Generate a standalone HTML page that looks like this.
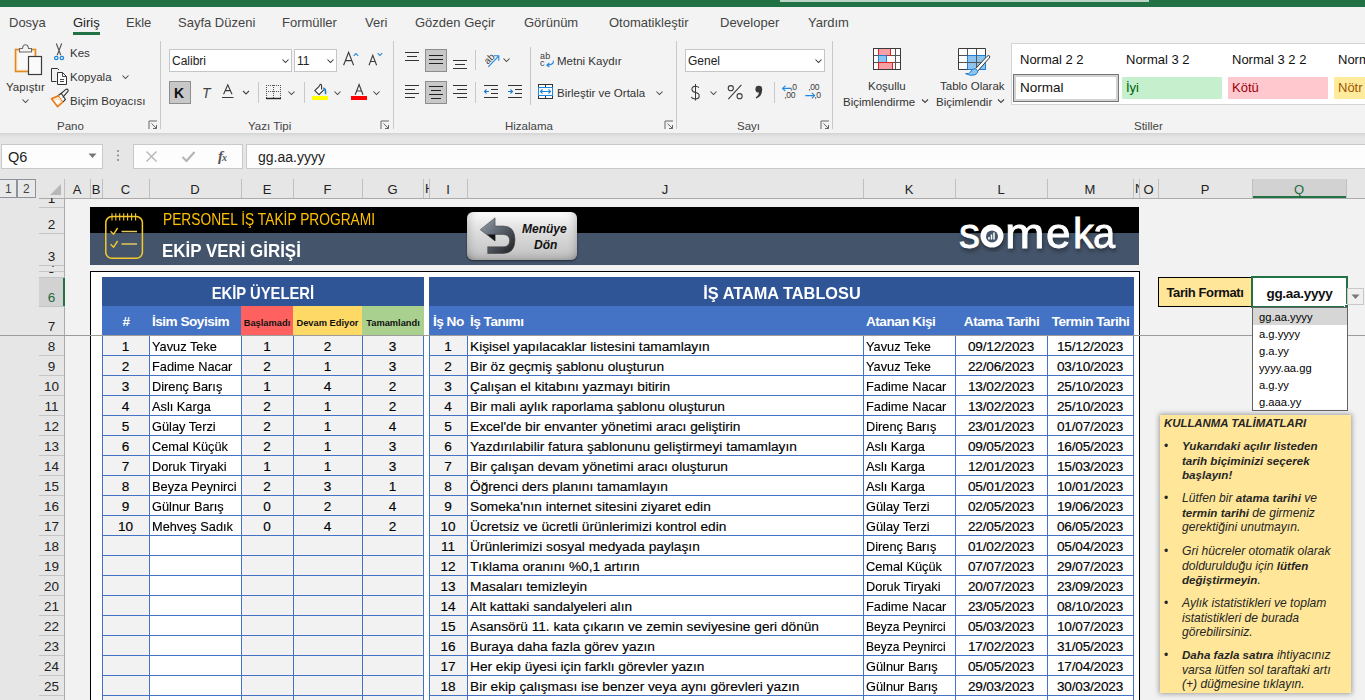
<!DOCTYPE html>
<html><head><meta charset="utf-8">
<style>
*{margin:0;padding:0;box-sizing:border-box}
html,body{width:1365px;height:700px;overflow:hidden;background:#f2f2f2}
body{position:relative;font-family:"Liberation Sans",sans-serif;color:#262626}
.a{position:absolute}
.t{position:absolute;white-space:nowrap;line-height:1}
#titlebar{left:0;top:0;width:1365px;height:7px;background:#217346}
#search{left:780px;top:0;width:369px;height:2px;background:#bcd5c6}
#tabs{left:0;top:7px;width:1365px;height:30px;background:#f3f3f3}
.tab{position:absolute;top:16px;font-size:13px;color:#444;white-space:nowrap;line-height:13px}
#ribbon{left:0;top:37px;width:1365px;height:96px;background:#f3f3f3}
#rshadow{left:0;top:133px;width:1365px;height:4px;background:linear-gradient(#d3d3d3,#e6e6e6)}
#fbar{left:0;top:137px;width:1365px;height:42px;background:#e6e6e6}
.rl{position:absolute;font-size:11.5px;color:#333;white-space:nowrap;line-height:12px}
.gl{position:absolute;top:120px;font-size:11.5px;color:#444;white-space:nowrap;line-height:12px}
.sep{position:absolute;width:1px;background:#c8c8c8}
.box{position:absolute;background:#fff;border:1px solid #c6c6c6}
</style></head><body>
<div id="titlebar" class="a"></div>
<div id="search" class="a"></div>
<div id="tabs" class="a"></div>
<div class="tab" style="left:9px">Dosya</div>
<div class="tab" style="left:73px;color:#222">Giriş</div>
<div class="a" style="left:73px;top:32px;width:27px;height:3px;background:#217346"></div>
<div class="tab" style="left:126px">Ekle</div>
<div class="tab" style="left:178px">Sayfa Düzeni</div>
<div class="tab" style="left:282px">Formüller</div>
<div class="tab" style="left:365px">Veri</div>
<div class="tab" style="left:415px">Gözden Geçir</div>
<div class="tab" style="left:524px">Görünüm</div>
<div class="tab" style="left:609px">Otomatikleştir</div>
<div class="tab" style="left:720px">Developer</div>
<div class="tab" style="left:808px">Yardım</div>
<div id="ribbon" class="a"></div>
<div id="rshadow" class="a"></div>
<div id="fbar" class="a"></div>
<!-- Pano -->
<svg class="a" style="left:12px;top:43px" width="34" height="34" viewBox="0 0 34 34">
 <rect x="3.5" y="6.5" width="20" height="22" fill="#fde6c8" stroke="#e08a1e" stroke-width="1.6"/>
 <rect x="5.5" y="8.5" width="16" height="18" fill="#fafafa"/>
 <path d="M7.5 9 V5.5 H10.5 Q11 1.8 13.5 1.8 Q16 1.8 16.5 5.5 H19.5 V9 Z" fill="#f3f3f3" stroke="#6b6b6b" stroke-width="1.1"/>
 <rect x="16.5" y="13.5" width="13" height="18" fill="#fafafa" stroke="#3b3b3b" stroke-width="1.2"/>
</svg>
<div class="rl" style="left:6px;top:81px">Yapıştır</div>
<svg class="a" style="left:21px;top:98px" width="9" height="6" viewBox="0 0 9 6"><path d="M1.5 1.5 L4.5 4.5 L7.5 1.5" fill="none" stroke="#444" stroke-width="1.05"/></svg>
<svg class="a" style="left:45px;top:40px" width="30" height="22" viewBox="45 40 30 22">
 <path d="M56.3 43.5 L60.8 55.2 M61.7 43.5 L57.2 55.2" stroke="#505050" stroke-width="1.1" fill="none"/>
 <circle cx="56.3" cy="58" r="1.7" fill="none" stroke="#1f87e0" stroke-width="1.3"/>
 <circle cx="61.9" cy="58" r="1.7" fill="none" stroke="#1f87e0" stroke-width="1.3"/>
</svg>
<div class="rl" style="left:70px;top:47px">Kes</div>
<svg class="a" style="left:45px;top:62px" width="30" height="26" viewBox="45 62 30 26">
 <path d="M56.5 81.5 H51.5 V68.5 H57.5 L59 70" fill="none" stroke="#333" stroke-width="1"/>
 <path d="M57.5 72.5 H62.5 L66.5 76.5 V84.5 H57.5 Z" fill="#fafafa" stroke="#333" stroke-width="1"/>
 <path d="M62.5 72.5 V76.5 H66.5 M60 79.5 H64 M60 81.5 H64" fill="none" stroke="#333" stroke-width="0.9"/>
</svg>
<div class="rl" style="left:70px;top:71px">Kopyala</div>
<svg class="a" style="left:121px;top:74px" width="9" height="6" viewBox="0 0 9 6"><path d="M1.5 1.5 L4.5 4.5 L7.5 1.5" fill="none" stroke="#444" stroke-width="1.05"/></svg>
<svg class="a" style="left:45px;top:88px" width="30" height="22" viewBox="45 88 30 22">
 <path d="M51.5 98.8 L58.8 95.5 L63.2 101.8 L57.6 106.8 Z" fill="#fbe3c6" stroke="#e8780f" stroke-width="1.5" stroke-linejoin="round"/>
 <path d="M54.5 101 L58 99.5 L60 102.5 L57.5 104.5 Z" fill="#fff"/>
 <path d="M58.6 95.3 L61.2 93.2 L65.4 99.4 L63.2 101.8" fill="#f7f7f7" stroke="#333" stroke-width="1.1"/>
 <path d="M60.5 94 L65.6 89.6 Q67 88.6 67.9 89.8 Q68.6 91 67.5 92 L62.8 97.3" fill="none" stroke="#333" stroke-width="1.1"/>
</svg>
<div class="rl" style="left:70px;top:95px">Biçim Boyacısı</div>
<div class="gl" style="left:57px">Pano</div>
<svg class="a" style="left:148px;top:120px" width="10" height="10" viewBox="0 0 10 10"><path d="M1 9 V1 H9 M3.5 3.5 L8.5 8.5 M5 8.5 H8.5 V5" fill="none" stroke="#666" stroke-width="1"/></svg>
<div class="sep" style="left:160px;top:41px;height:88px"></div>
<!-- Yazı Tipi -->
<div class="box" style="left:169px;top:49px;width:123px;height:23px"></div>
<div class="rl" style="left:172px;top:55px;font-size:12px;color:#222">Calibri</div>
<svg class="a" style="left:281px;top:58px" width="9" height="6" viewBox="0 0 9 6"><path d="M1.5 1.5 L4.5 4.5 L7.5 1.5" fill="none" stroke="#333" stroke-width="1.05"/></svg>
<div class="box" style="left:294px;top:49px;width:43px;height:23px"></div>
<div class="rl" style="left:297px;top:55px;font-size:12px;color:#222">11</div>
<svg class="a" style="left:326px;top:58px" width="9" height="6" viewBox="0 0 9 6"><path d="M1.5 1.5 L4.5 4.5 L7.5 1.5" fill="none" stroke="#333" stroke-width="1.05"/></svg>
<svg class="a" style="left:340px;top:50px" width="45" height="17" viewBox="340 50 45 17">
 <path d="M343.6 65.2 L348.6 52.3 L353.6 65.2 M345.4 60.6 H351.8" fill="none" stroke="#3a3a3a" stroke-width="1.1"/>
 <path d="M353.6 55.8 L355.9 53.5 L358.2 55.8" fill="none" stroke="#2b8ad8" stroke-width="1.1"/>
 <path d="M369 65.2 L372.8 55.3 L376.6 65.2 M370.4 61.5 H375.2" fill="none" stroke="#3a3a3a" stroke-width="1.1"/>
 <path d="M377.6 53.2 L379.9 55.5 L382.2 53.2" fill="none" stroke="#2b8ad8" stroke-width="1.1"/>
</svg>
<div class="a" style="left:169px;top:81px;width:22px;height:23px;background:#c8c8c8;border:1px solid #8d8d8d"></div>
<div class="t" style="left:174px;top:86px;font-size:14px;font-weight:bold;color:#111">K</div>
<div class="t" style="left:202px;top:86px;font-size:14px;font-style:italic;color:#444">T</div>
<svg class="a" style="left:220px;top:82px" width="16" height="18" viewBox="220 82 16 18">
 <path d="M223.6 94.2 L227.8 84.8 L232 94.2 M225.2 90.6 H230.4" fill="none" stroke="#3a3a3a" stroke-width="1.1"/>
 <path d="M222 97.5 H233.5" stroke="#3a3a3a" stroke-width="1"/>
</svg>
<svg class="a" style="left:242px;top:90px" width="8" height="5" viewBox="0 0 8 5"><path d="M1 1 L4 4 L7 1" fill="none" stroke="#444" stroke-width="1.1"/></svg>
<div class="sep" style="left:258px;top:82px;height:21px"></div>
<svg class="a" style="left:265px;top:84px" width="17" height="16" viewBox="0 0 17 16">
 <path d="M1.5 1 V14 M8.5 1 V14 M15.5 1 V14" fill="none" stroke="#555" stroke-width="1" stroke-dasharray="1 1"/><path d="M1 1.5 H16 M1 7.5 H16" fill="none" stroke="#555" stroke-width="1" stroke-dasharray="1 1"/>
 <path d="M1 14.5 H16" stroke="#222" stroke-width="1.4"/>
</svg>
<svg class="a" style="left:287px;top:90px" width="9" height="6" viewBox="0 0 9 6"><path d="M1.5 1.5 L4.5 4.5 L7.5 1.5" fill="none" stroke="#444" stroke-width="1.05"/></svg>
<div class="sep" style="left:304px;top:82px;height:21px"></div>
<svg class="a" style="left:310px;top:82px" width="20" height="19" viewBox="310 82 20 19">
 <path d="M319.4 86.1 L314.8 90.7 L319 94.7 L324 89.6" fill="#fbfbfb" stroke="#333" stroke-width="1.1" stroke-linejoin="round"/>
 <path d="M319.4 86.1 Q319.9 84.2 320.8 84.3 Q321.6 84.5 321.6 86.3 V89.6" fill="none" stroke="#333" stroke-width="1.1"/>
 <path d="M323.3 88.2 Q326.1 88.6 325.5 94.2" fill="none" stroke="#1f7fd4" stroke-width="1.7"/>
 <rect x="312" y="96" width="16" height="4" fill="#ffff00"/>
</svg>
<svg class="a" style="left:333px;top:90px" width="9" height="6" viewBox="0 0 9 6"><path d="M1.5 1.5 L4.5 4.5 L7.5 1.5" fill="none" stroke="#444" stroke-width="1.05"/></svg>
<svg class="a" style="left:350px;top:82px" width="18" height="19" viewBox="350 82 18 19">
 <path d="M355.2 94.8 L359.1 84.5 L363 94.8 M356.7 91 H361.5" fill="none" stroke="#3a3a3a" stroke-width="1.1"/>
 <rect x="351" y="96" width="16" height="4" fill="#ff0000"/>
</svg>
<svg class="a" style="left:372px;top:90px" width="9" height="6" viewBox="0 0 9 6"><path d="M1.5 1.5 L4.5 4.5 L7.5 1.5" fill="none" stroke="#444" stroke-width="1.05"/></svg>
<div class="gl" style="left:248px">Yazı Tipi</div>
<svg class="a" style="left:380px;top:120px" width="10" height="10" viewBox="0 0 10 10"><path d="M1 9 V1 H9 M3.5 3.5 L8.5 8.5 M5 8.5 H8.5 V5" fill="none" stroke="#666" stroke-width="1"/></svg>
<div class="sep" style="left:393px;top:41px;height:88px"></div>
<!-- Hizalama -->
<svg class="a" style="left:404px;top:51px" width="16" height="12" viewBox="0 0 16 12"><path d="M1 1.5 H15 M3 5.5 H13 M1 9.5 H15" stroke="#333" stroke-width="1"/></svg>
<div class="a" style="left:425px;top:49px;width:22px;height:23px;background:#c8c8c8;border:1px solid #8d8d8d"></div>
<svg class="a" style="left:428px;top:53px" width="16" height="14" viewBox="0 0 16 14"><path d="M1 2.5 H15 M1 6.5 H15 M1 10.5 H15" stroke="#222" stroke-width="1"/></svg>
<svg class="a" style="left:452px;top:58px" width="16" height="12" viewBox="0 0 16 12"><path d="M1 2.5 H15 M3 6.5 H13 M1 10.5 H15" stroke="#333" stroke-width="1"/></svg>
<div class="sep" style="left:475px;top:50px;height:20px"></div>
<svg class="a" style="left:480px;top:48px" width="22" height="22" viewBox="480 48 22 22">
 <text x="483" y="62.5" font-size="9.5" font-family="Liberation Sans" fill="#3a3a3a" transform="rotate(-45 488 58)">ab</text>
 <path d="M488.3 66.8 L498.6 56.1 M493.8 55.8 H498.8 V60.8" fill="none" stroke="#1f87e0" stroke-width="1.1"/>
</svg>
<svg class="a" style="left:502px;top:57px" width="9" height="6" viewBox="0 0 9 6"><path d="M1.5 1.5 L4.5 4.5 L7.5 1.5" fill="none" stroke="#444" stroke-width="1.05"/></svg>
<div class="sep" style="left:530px;top:47px;height:58px"></div>
<svg class="a" style="left:538px;top:50px" width="18" height="18" viewBox="538 50 18 18">
 <text x="540" y="59.3" font-size="9" font-family="Liberation Sans" fill="#3a3a3a" letter-spacing="0.3">ab</text>
 <text x="540" y="66.3" font-size="9" font-family="Liberation Sans" fill="#3a3a3a">c</text>
 <path d="M553.3 60.6 Q554.3 64.6 547.3 65.2 M549.3 63 L546.9 65.2 L549.3 67.2" fill="none" stroke="#1f87e0" stroke-width="1.1"/>
</svg>
<div class="rl" style="left:557px;top:55px">Metni Kaydır</div>
<svg class="a" style="left:404px;top:84px" width="16" height="15" viewBox="0 0 16 15"><path d="M1 1.5 H15 M1 5.5 H11 M1 9.5 H15 M1 13.5 H11" stroke="#333" stroke-width="1"/></svg>
<div class="a" style="left:425px;top:81px;width:22px;height:23px;background:#c8c8c8;border:1px solid #8d8d8d"></div>
<svg class="a" style="left:428px;top:85px" width="16" height="15" viewBox="0 0 16 15"><path d="M1 1.5 H15 M3 5.5 H13 M1 9.5 H15 M3 13.5 H13" stroke="#222" stroke-width="1"/></svg>
<svg class="a" style="left:452px;top:84px" width="16" height="15" viewBox="0 0 16 15"><path d="M1 1.5 H15 M5 5.5 H15 M1 9.5 H15 M5 13.5 H15" stroke="#333" stroke-width="1"/></svg>
<div class="sep" style="left:475px;top:82px;height:21px"></div>
<svg class="a" style="left:483px;top:84px" width="16" height="15" viewBox="0 0 16 15"><path d="M1 1.5 H15 M8 5.5 H15 M8 9.5 H15 M1 13.5 H15" stroke="#333" stroke-width="1"/><path d="M6 7.5 H1.5 M3.5 5.5 L1.5 7.5 L3.5 9.5" fill="none" stroke="#1e7ad6" stroke-width="1.1"/></svg>
<svg class="a" style="left:507px;top:84px" width="16" height="15" viewBox="0 0 16 15"><path d="M1 1.5 H15 M8 5.5 H15 M8 9.5 H15 M1 13.5 H15" stroke="#333" stroke-width="1"/><path d="M1 7.5 H5.5 M3.5 5.5 L5.5 7.5 L3.5 9.5" fill="none" stroke="#1e7ad6" stroke-width="1.1"/></svg>
<svg class="a" style="left:536px;top:82px" width="19" height="19" viewBox="536 82 19 19">
 <rect x="538.5" y="84.5" width="14" height="14" fill="#fff" stroke="#333" stroke-width="1"/>
 <path d="M545.5 84.5 V87.5 M545.5 95.5 V98.5" stroke="#333" stroke-width="1"/>
 <rect x="538.5" y="87.5" width="14" height="8" fill="#fff" stroke="#1f87e0" stroke-width="1"/>
 <path d="M540.5 91.5 H550.5 M542.5 89.5 L540.5 91.5 L542.5 93.5 M548.5 89.5 L550.5 91.5 L548.5 93.5" fill="none" stroke="#1f87e0" stroke-width="1.1"/>
</svg>
<div class="rl" style="left:557px;top:87px">Birleştir ve Ortala</div>
<svg class="a" style="left:655px;top:90px" width="9" height="6" viewBox="0 0 9 6"><path d="M1.5 1.5 L4.5 4.5 L7.5 1.5" fill="none" stroke="#444" stroke-width="1.05"/></svg>
<div class="gl" style="left:505px">Hizalama</div>
<svg class="a" style="left:664px;top:120px" width="10" height="10" viewBox="0 0 10 10"><path d="M1 9 V1 H9 M3.5 3.5 L8.5 8.5 M5 8.5 H8.5 V5" fill="none" stroke="#666" stroke-width="1"/></svg>
<div class="sep" style="left:676px;top:41px;height:88px"></div>
<!-- Sayı -->
<div class="box" style="left:685px;top:49px;width:140px;height:23px"></div>
<div class="rl" style="left:688px;top:55px;font-size:12px;color:#222">Genel</div>
<svg class="a" style="left:814px;top:58px" width="9" height="6" viewBox="0 0 9 6"><path d="M1.5 1.5 L4.5 4.5 L7.5 1.5" fill="none" stroke="#333" stroke-width="1.05"/></svg>
<svg class="a" style="left:688px;top:82px" width="14" height="20" viewBox="688 82 14 20">
 <path d="M695.5 84 V100.5" stroke="#3a3a3a" stroke-width="1.05"/>
 <path d="M699 87.6 Q697.6 86.2 695.3 86.2 Q691.9 86.4 691.9 89.3 Q692 91.8 695.5 92.5 Q699.3 93.2 699.2 96.1 Q699 98.8 695.3 98.9 Q692.6 98.9 691.2 97.2" fill="none" stroke="#3a3a3a" stroke-width="1.05"/>
</svg>
<svg class="a" style="left:709px;top:90px" width="9" height="6" viewBox="0 0 9 6"><path d="M1.5 1.5 L4.5 4.5 L7.5 1.5" fill="none" stroke="#444" stroke-width="1.05"/></svg>
<svg class="a" style="left:725px;top:82px" width="20" height="20" viewBox="725 82 20 20">
 <circle cx="730.8" cy="88.2" r="2.6" fill="none" stroke="#3a3a3a" stroke-width="1.05"/>
 <circle cx="739.6" cy="96.2" r="2.6" fill="none" stroke="#3a3a3a" stroke-width="1.05"/>
 <path d="M728.3 99.2 L741.4 84.8" stroke="#3a3a3a" stroke-width="1.05"/>
</svg>
<svg class="a" style="left:753px;top:84px" width="12" height="16" viewBox="753 84 12 16">
 <circle cx="758.8" cy="89.2" r="3.4" fill="#3a3a3a"/>
 <path d="M762 89.5 Q762.8 95.8 756.2 98.6 L755.6 97.5 Q759 95.5 759 91.8 Z" fill="#3a3a3a"/>
</svg>
<div class="sep" style="left:774px;top:82px;height:21px"></div>
<svg class="a" style="left:780px;top:82px" width="20" height="19" viewBox="780 82 20 19">
 <text x="790.3" y="90.4" font-size="8.6" font-family="Liberation Sans" fill="#3a3a3a" letter-spacing="-0.4">,0</text>
 <text x="784.3" y="98.4" font-size="8.6" font-family="Liberation Sans" fill="#3a3a3a" letter-spacing="-0.4">,00</text>
 <path d="M791.5 88.4 H782.6 M785.4 85.6 L782.6 88.4 L785.4 91.2" fill="none" stroke="#1f87e0" stroke-width="1.1"/>
</svg>
<svg class="a" style="left:803px;top:82px" width="20" height="19" viewBox="803 82 20 19">
 <text x="808.3" y="90.4" font-size="8.6" font-family="Liberation Sans" fill="#3a3a3a" letter-spacing="-0.4">,00</text>
 <text x="814.3" y="98.4" font-size="8.6" font-family="Liberation Sans" fill="#3a3a3a" letter-spacing="-0.4">,0</text>
 <path d="M805.3 95.6 H814.6 M811.8 92.8 L814.6 95.6 L811.8 98.4" fill="none" stroke="#1f87e0" stroke-width="1.1"/>
</svg>
<div class="gl" style="left:737px">Sayı</div>
<svg class="a" style="left:820px;top:120px" width="10" height="10" viewBox="0 0 10 10"><path d="M1 9 V1 H9 M3.5 3.5 L8.5 8.5 M5 8.5 H8.5 V5" fill="none" stroke="#666" stroke-width="1"/></svg>
<div class="sep" style="left:832px;top:41px;height:88px"></div>
<!-- Stiller -->
<svg class="a" style="left:870px;top:45px" width="35" height="28" viewBox="870 45 35 28">
 <rect x="873.5" y="48.5" width="27" height="21" fill="#fdfdfd"/>
 <path d="M873.5 55.5 H900.5 M873.5 62.5 H900.5 M878.5 48.5 V69.5 M895.5 48.5 V69.5" stroke="#555" stroke-width="1"/>
 <rect x="878.5" y="48.5" width="12" height="7" fill="#f7a1a6" stroke="#e02020" stroke-width="1"/>
 <rect x="878.5" y="55.5" width="8" height="7" fill="#8cc4ee" stroke="#1f7fd4" stroke-width="1"/>
 <rect x="878.5" y="62.5" width="14" height="7" fill="#f7a1a6" stroke="#e02020" stroke-width="1"/>
 <rect x="873.5" y="48.5" width="27" height="21" fill="none" stroke="#3a3a3a" stroke-width="1"/>
</svg>
<div class="rl" style="left:868px;top:80px">Koşullu</div>
<div class="rl" style="left:843px;top:96px">Biçimlendirme</div>
<svg class="a" style="left:921px;top:98px" width="8" height="6" viewBox="0 0 8 6"><path d="M1 1.5 L4 4.5 L7 1.5" fill="none" stroke="#444" stroke-width="1.1"/></svg>
<svg class="a" style="left:955px;top:45px" width="38" height="32" viewBox="955 45 38 32">
 <rect x="958.5" y="48.5" width="27" height="21" fill="#fdfdfd"/>
 <rect x="967.5" y="55.5" width="18" height="14" fill="#8cc4ee" stroke="#1f7fd4" stroke-width="1"/>
 <path d="M958.5 55.5 H967.5 M958.5 62.5 H967.5 M967.5 48.5 V55.5 M976.5 48.5 V55.5 M967.5 62.5 H985.5 M976.5 55.5 V69.5" stroke="#555" stroke-width="1"/>
 <path d="M958.5 69.5 V48.5 H985.5 V55.5 M958.5 69.5 H967.5" fill="none" stroke="#3a3a3a" stroke-width="1"/>
 <path d="M975.5 68.8 L987 56.3 Q988.5 55 989.5 55.9 Q990.3 56.9 989 58.3 L977.8 71" fill="#fdfdfd" stroke="#3a3a3a" stroke-width="1"/>
 <path d="M975.2 68.6 Q971.5 69 970.5 72 Q969.3 74.2 965.5 73.6 Q970.5 76.5 975 74.8 Q978 73.3 977.8 71 Z" fill="#8cc4ee" stroke="#1f7fd4" stroke-width="1"/>
</svg>
<div class="rl" style="left:940px;top:80px">Tablo Olarak</div>
<div class="rl" style="left:936px;top:96px">Biçimlendir</div>
<svg class="a" style="left:997px;top:98px" width="8" height="6" viewBox="0 0 8 6"><path d="M1 1.5 L4 4.5 L7 1.5" fill="none" stroke="#444" stroke-width="1.1"/></svg>
<div class="a" style="left:1011px;top:43px;width:360px;height:62px;background:#fff;border:1px solid #d4d4d4"></div>
<div class="t" style="left:1020px;top:53px;font-size:13px;color:#111">Normal 2 2</div>
<div class="t" style="left:1126px;top:53px;font-size:13px;color:#111">Normal 3 2</div>
<div class="t" style="left:1232px;top:53px;font-size:13px;color:#111">Normal 3 2 2</div>
<div class="t" style="left:1338px;top:53px;font-size:13px;color:#111">Normal</div>
<div class="a" style="left:1013px;top:74px;width:106px;height:28px;border:1px solid #767676;box-shadow:inset 0 0 0 2px #d2d2d2;background:#fff"></div>
<div class="t" style="left:1020px;top:81px;font-size:13.5px;color:#111">Normal</div>
<div class="a" style="left:1122px;top:77px;width:100px;height:22px;background:#c6efce"></div>
<div class="t" style="left:1126px;top:81px;font-size:13px;color:#006100">İyi</div>
<div class="a" style="left:1228px;top:77px;width:100px;height:22px;background:#ffc7ce"></div>
<div class="t" style="left:1232px;top:81px;font-size:13px;color:#9c0006">Kötü</div>
<div class="a" style="left:1334px;top:77px;width:40px;height:22px;background:#ffeb9c"></div>
<div class="t" style="left:1338px;top:81px;font-size:13px;color:#9c5700">Nötr</div>
<div class="gl" style="left:1134px">Stiller</div>

<div class="box" style="left:1px;top:144px;width:102px;height:25px;background:#fdfdfd;border-color:#c9c9c9"></div>
<div class="t" style="left:8px;top:150px;font-size:14.5px;color:#222">Q6</div>
<svg class="a" style="left:88px;top:153px" width="9" height="6" viewBox="0 0 9 6"><path d="M0.5 0.5 H8.5 L4.5 5 Z" fill="#777"/></svg>
<svg class="a" style="left:116px;top:149px" width="4" height="13" viewBox="0 0 4 13"><circle cx="2" cy="2" r="1.1" fill="#8a8a8a"/><circle cx="2" cy="6.5" r="1.1" fill="#8a8a8a"/><circle cx="2" cy="11" r="1.1" fill="#8a8a8a"/></svg>
<div class="box" style="left:133px;top:144px;width:110px;height:25px;background:#fdfdfd;border-color:#c9c9c9"></div>
<svg class="a" style="left:145px;top:150px" width="13" height="13" viewBox="0 0 13 13"><path d="M1.5 1.5 L11.5 11.5 M11.5 1.5 L1.5 11.5" stroke="#b3b3b3" stroke-width="1.3"/></svg>
<svg class="a" style="left:181px;top:150px" width="15" height="13" viewBox="0 0 15 13"><path d="M1.5 7 L5.5 11 L13.5 2" fill="none" stroke="#b3b3b3" stroke-width="2"/></svg>
<div class="t" style="left:218px;top:149px;font-size:15px;font-style:italic;font-weight:bold;color:#555;font-family:'Liberation Serif',serif">f<span style="font-size:10px;margin-left:-1px">x</span></div>
<div class="box" style="left:246px;top:144px;width:1125px;height:25px;background:#fdfdfd;border-color:#c9c9c9"></div>
<div class="t" style="left:258px;top:150px;font-size:14px;color:#222">gg.aa.yyyy</div>

<div class="a" style="left:0;top:179px;width:1365px;height:20px;background:#e6e6e6"></div>
<div class="a" style="left:39px;top:198px;width:1326px;height:1px;background:#ababab"></div>
<div class="a" style="left:1252px;top:179px;width:95px;height:19px;background:#d2d2d2"></div>
<div class="a" style="left:1252px;top:196px;width:95px;height:2px;background:#217346"></div>
<div class="a" style="left:64px;top:179px;width:1px;height:19px;background:#c0c0c0"></div>
<div class="t" style="left:64px;top:183px;width:26px;text-align:center;font-size:13px;color:#222">A</div>
<div class="a" style="left:90px;top:179px;width:1px;height:19px;background:#c0c0c0"></div>
<div class="t" style="left:90px;top:183px;width:12px;text-align:center;font-size:13px;color:#222">B</div>
<div class="a" style="left:102px;top:179px;width:1px;height:19px;background:#c0c0c0"></div>
<div class="t" style="left:102px;top:183px;width:47px;text-align:center;font-size:13px;color:#222">C</div>
<div class="a" style="left:149px;top:179px;width:1px;height:19px;background:#c0c0c0"></div>
<div class="t" style="left:149px;top:183px;width:92px;text-align:center;font-size:13px;color:#222">D</div>
<div class="a" style="left:241px;top:179px;width:1px;height:19px;background:#c0c0c0"></div>
<div class="t" style="left:241px;top:183px;width:52px;text-align:center;font-size:13px;color:#222">E</div>
<div class="a" style="left:293px;top:179px;width:1px;height:19px;background:#c0c0c0"></div>
<div class="t" style="left:293px;top:183px;width:69px;text-align:center;font-size:13px;color:#222">F</div>
<div class="a" style="left:362px;top:179px;width:1px;height:19px;background:#c0c0c0"></div>
<div class="t" style="left:362px;top:183px;width:61px;text-align:center;font-size:13px;color:#222">G</div>
<div class="a" style="left:423px;top:179px;width:1px;height:19px;background:#c0c0c0"></div>
<div class="a" style="left:424px;top:179px;width:5px;height:19px;overflow:hidden"><div class="t" style="left:1px;top:3px;font-size:13px;color:#222">H</div></div>
<div class="a" style="left:429px;top:179px;width:1px;height:19px;background:#c0c0c0"></div>
<div class="t" style="left:429px;top:183px;width:38px;text-align:center;font-size:13px;color:#222">I</div>
<div class="a" style="left:467px;top:179px;width:1px;height:19px;background:#c0c0c0"></div>
<div class="t" style="left:467px;top:183px;width:396px;text-align:center;font-size:13px;color:#222">J</div>
<div class="a" style="left:863px;top:179px;width:1px;height:19px;background:#c0c0c0"></div>
<div class="t" style="left:863px;top:183px;width:92px;text-align:center;font-size:13px;color:#222">K</div>
<div class="a" style="left:955px;top:179px;width:1px;height:19px;background:#c0c0c0"></div>
<div class="t" style="left:955px;top:183px;width:92px;text-align:center;font-size:13px;color:#222">L</div>
<div class="a" style="left:1047px;top:179px;width:1px;height:19px;background:#c0c0c0"></div>
<div class="t" style="left:1047px;top:183px;width:86px;text-align:center;font-size:13px;color:#222">M</div>
<div class="a" style="left:1133px;top:179px;width:1px;height:19px;background:#c0c0c0"></div>
<div class="a" style="left:1134px;top:179px;width:5px;height:19px;overflow:hidden"><div class="t" style="left:1px;top:3px;font-size:13px;color:#222">N</div></div>
<div class="a" style="left:1139px;top:179px;width:1px;height:19px;background:#c0c0c0"></div>
<div class="t" style="left:1139px;top:183px;width:19px;text-align:center;font-size:13px;color:#222">O</div>
<div class="a" style="left:1158px;top:179px;width:1px;height:19px;background:#c0c0c0"></div>
<div class="t" style="left:1158px;top:183px;width:94px;text-align:center;font-size:13px;color:#222">P</div>
<div class="a" style="left:1252px;top:179px;width:1px;height:19px;background:#c0c0c0"></div>
<div class="t" style="left:1252px;top:183px;width:94px;text-align:center;font-size:13px;color:#1e6b41">Q</div>
<div class="a" style="left:1346px;top:179px;width:1px;height:19px;background:#c0c0c0"></div>
<div class="t" style="left:1346px;top:183px;width:94px;text-align:center;font-size:13px;color:#222">R</div>
<div class="a" style="left:-1px;top:179px;width:18px;height:19px;border:1px solid #8c939c;background:#e9e9e9"></div>
<div class="t" style="left:5px;top:183px;font-size:12px;color:#444">1</div>
<div class="a" style="left:16px;top:179px;width:20px;height:19px;border:1px solid #8c939c;border-left-width:2px;background:#e9e9e9"></div>
<div class="t" style="left:23px;top:183px;font-size:12px;color:#444">2</div>
<svg class="a" style="left:49px;top:183px" width="13" height="13" viewBox="0 0 13 13"><path d="M12 1 V12 H1 Z" fill="#b7b7b7"/></svg>
<div class="a" style="left:0;top:199px;width:64px;height:501px;background:#e6e6e6"></div>
<div class="a" style="left:39px;top:278px;width:25px;height:28px;background:#d2d2d2"></div>
<div class="a" style="left:63px;top:278px;width:2px;height:28px;background:#217346"></div>
<div class="a" style="left:64px;top:199px;width:1px;height:501px;background:#ababab"></div>
<div class="a" style="left:63px;top:278px;width:2px;height:28px;background:#217346"></div>
<div class="a" style="left:39px;top:207px;width:25px;height:1px;background:#c4c4c4"></div>
<div class="a" style="left:39px;top:198px;width:25px;height:9px;overflow:hidden"><div class="t" style="left:0;width:25px;bottom:2px;text-align:center;font-size:13.5px;color:#222">1</div></div>
<div class="a" style="left:39px;top:233px;width:25px;height:1px;background:#c4c4c4"></div>
<div class="a" style="left:39px;top:207px;width:25px;height:26px;overflow:hidden"><div class="t" style="left:0;width:25px;bottom:2px;text-align:center;font-size:13.5px;color:#222">2</div></div>
<div class="a" style="left:39px;top:265px;width:25px;height:1px;background:#c4c4c4"></div>
<div class="a" style="left:39px;top:234px;width:25px;height:31px;overflow:hidden"><div class="t" style="left:0;width:25px;bottom:2px;text-align:center;font-size:13.5px;color:#222">3</div></div>
<div class="a" style="left:39px;top:271px;width:25px;height:1px;background:#c4c4c4"></div>
<div class="a" style="left:39px;top:266px;width:25px;height:5px;overflow:hidden"><div class="t" style="left:0;width:25px;bottom:2px;text-align:center;font-size:13.5px;color:#222">4</div></div>
<div class="a" style="left:39px;top:277px;width:25px;height:1px;background:#c4c4c4"></div>
<div class="a" style="left:39px;top:272px;width:25px;height:5px;overflow:hidden"><div class="t" style="left:0;width:25px;bottom:2px;text-align:center;font-size:13.5px;color:#222">5</div></div>
<div class="a" style="left:39px;top:306px;width:25px;height:1px;background:#c4c4c4"></div>
<div class="a" style="left:39px;top:278px;width:25px;height:28px;overflow:hidden"><div class="t" style="left:0;width:25px;bottom:2px;text-align:center;font-size:13.5px;color:#1e6b41">6</div></div>
<div class="a" style="left:39px;top:335px;width:25px;height:1px;background:#c4c4c4"></div>
<div class="a" style="left:39px;top:307px;width:25px;height:28px;overflow:hidden"><div class="t" style="left:0;width:25px;bottom:2px;text-align:center;font-size:13.5px;color:#222">7</div></div>
<div class="a" style="left:39px;top:355px;width:25px;height:1px;background:#c4c4c4"></div>
<div class="a" style="left:39px;top:336px;width:25px;height:19px;overflow:hidden"><div class="t" style="left:0;width:25px;bottom:2px;text-align:center;font-size:13.5px;color:#222">8</div></div>
<div class="a" style="left:39px;top:375px;width:25px;height:1px;background:#c4c4c4"></div>
<div class="a" style="left:39px;top:356px;width:25px;height:19px;overflow:hidden"><div class="t" style="left:0;width:25px;bottom:2px;text-align:center;font-size:13.5px;color:#222">9</div></div>
<div class="a" style="left:39px;top:395px;width:25px;height:1px;background:#c4c4c4"></div>
<div class="a" style="left:39px;top:376px;width:25px;height:19px;overflow:hidden"><div class="t" style="left:0;width:25px;bottom:2px;text-align:center;font-size:13.5px;color:#222">10</div></div>
<div class="a" style="left:39px;top:415px;width:25px;height:1px;background:#c4c4c4"></div>
<div class="a" style="left:39px;top:396px;width:25px;height:19px;overflow:hidden"><div class="t" style="left:0;width:25px;bottom:2px;text-align:center;font-size:13.5px;color:#222">11</div></div>
<div class="a" style="left:39px;top:435px;width:25px;height:1px;background:#c4c4c4"></div>
<div class="a" style="left:39px;top:416px;width:25px;height:19px;overflow:hidden"><div class="t" style="left:0;width:25px;bottom:2px;text-align:center;font-size:13.5px;color:#222">12</div></div>
<div class="a" style="left:39px;top:455px;width:25px;height:1px;background:#c4c4c4"></div>
<div class="a" style="left:39px;top:436px;width:25px;height:19px;overflow:hidden"><div class="t" style="left:0;width:25px;bottom:2px;text-align:center;font-size:13.5px;color:#222">13</div></div>
<div class="a" style="left:39px;top:475px;width:25px;height:1px;background:#c4c4c4"></div>
<div class="a" style="left:39px;top:456px;width:25px;height:19px;overflow:hidden"><div class="t" style="left:0;width:25px;bottom:2px;text-align:center;font-size:13.5px;color:#222">14</div></div>
<div class="a" style="left:39px;top:495px;width:25px;height:1px;background:#c4c4c4"></div>
<div class="a" style="left:39px;top:476px;width:25px;height:19px;overflow:hidden"><div class="t" style="left:0;width:25px;bottom:2px;text-align:center;font-size:13.5px;color:#222">15</div></div>
<div class="a" style="left:39px;top:515px;width:25px;height:1px;background:#c4c4c4"></div>
<div class="a" style="left:39px;top:496px;width:25px;height:19px;overflow:hidden"><div class="t" style="left:0;width:25px;bottom:2px;text-align:center;font-size:13.5px;color:#222">16</div></div>
<div class="a" style="left:39px;top:535px;width:25px;height:1px;background:#c4c4c4"></div>
<div class="a" style="left:39px;top:516px;width:25px;height:19px;overflow:hidden"><div class="t" style="left:0;width:25px;bottom:2px;text-align:center;font-size:13.5px;color:#222">17</div></div>
<div class="a" style="left:39px;top:555px;width:25px;height:1px;background:#c4c4c4"></div>
<div class="a" style="left:39px;top:536px;width:25px;height:19px;overflow:hidden"><div class="t" style="left:0;width:25px;bottom:2px;text-align:center;font-size:13.5px;color:#222">18</div></div>
<div class="a" style="left:39px;top:575px;width:25px;height:1px;background:#c4c4c4"></div>
<div class="a" style="left:39px;top:556px;width:25px;height:19px;overflow:hidden"><div class="t" style="left:0;width:25px;bottom:2px;text-align:center;font-size:13.5px;color:#222">19</div></div>
<div class="a" style="left:39px;top:595px;width:25px;height:1px;background:#c4c4c4"></div>
<div class="a" style="left:39px;top:576px;width:25px;height:19px;overflow:hidden"><div class="t" style="left:0;width:25px;bottom:2px;text-align:center;font-size:13.5px;color:#222">20</div></div>
<div class="a" style="left:39px;top:615px;width:25px;height:1px;background:#c4c4c4"></div>
<div class="a" style="left:39px;top:596px;width:25px;height:19px;overflow:hidden"><div class="t" style="left:0;width:25px;bottom:2px;text-align:center;font-size:13.5px;color:#222">21</div></div>
<div class="a" style="left:39px;top:635px;width:25px;height:1px;background:#c4c4c4"></div>
<div class="a" style="left:39px;top:616px;width:25px;height:19px;overflow:hidden"><div class="t" style="left:0;width:25px;bottom:2px;text-align:center;font-size:13.5px;color:#222">22</div></div>
<div class="a" style="left:39px;top:655px;width:25px;height:1px;background:#c4c4c4"></div>
<div class="a" style="left:39px;top:636px;width:25px;height:19px;overflow:hidden"><div class="t" style="left:0;width:25px;bottom:2px;text-align:center;font-size:13.5px;color:#222">23</div></div>
<div class="a" style="left:39px;top:675px;width:25px;height:1px;background:#c4c4c4"></div>
<div class="a" style="left:39px;top:656px;width:25px;height:19px;overflow:hidden"><div class="t" style="left:0;width:25px;bottom:2px;text-align:center;font-size:13.5px;color:#222">24</div></div>
<div class="a" style="left:39px;top:695px;width:25px;height:1px;background:#c4c4c4"></div>
<div class="a" style="left:39px;top:676px;width:25px;height:19px;overflow:hidden"><div class="t" style="left:0;width:25px;bottom:2px;text-align:center;font-size:13.5px;color:#222">25</div></div>
<div class="a" style="left:39px;top:715px;width:25px;height:1px;background:#c4c4c4"></div>
<div class="a" style="left:39px;top:696px;width:25px;height:19px;overflow:hidden"><div class="t" style="left:0;width:25px;bottom:2px;text-align:center;font-size:13.5px;color:#222">26</div></div>
<div class="a" style="left:65px;top:199px;width:1300px;height:501px;background:#f2f2f2"></div>
<div class="a" style="left:90px;top:271px;width:1050px;height:440px;background:#fff;border:1px solid #000"></div>
<div class="a" style="left:90px;top:207px;width:1049px;height:26px;background:#000"></div>
<div class="a" style="left:90px;top:233px;width:1049px;height:32px;background:#44546a"></div>
<svg class="a" style="left:100px;top:210px" width="48" height="52" viewBox="100 210 48 52">
 <rect x="105.8" y="216.6" width="36.6" height="41.6" rx="6" fill="none" stroke="#f5c92a" stroke-width="1.5"/>
 <path d="M112 213.2 V220.4 M115.8 213.2 V220.4 M119.7 213.2 V220.4 M123.7 213.2 V220.4 M127.6 213.2 V220.4 M131.6 213.2 V220.4 M135.6 213.2 V220.4" stroke="#f5c92a" stroke-width="1.1"/>
 <path d="M110.5 231.3 L113.6 234.2 L117.6 228 M110.5 244.3 L113.6 247.2 L117.6 241" fill="none" stroke="#f5c92a" stroke-width="1.4"/>
 <path d="M121.5 231.5 H137 M121.5 244 H137" stroke="#e4c85a" stroke-width="1.3"/>
</svg>
<div class="t" style="left:163px;top:212px;font-size:16px;color:#ffc000;transform-origin:0 0;transform:scaleX(0.86)">PERSONEL İŞ TAKİP PROGRAMI</div>
<div class="t" style="left:162px;top:242px;font-size:18px;font-weight:bold;color:#fff;transform-origin:0 0;transform:scaleX(0.94)">EKİP VERİ GİRİŞİ</div>
<div class="a" style="left:467px;top:212px;width:110px;height:48px;border-radius:6px;background:linear-gradient(180deg,#fdfdfd 0%,#e4e4e4 30%,#cfcfcf 70%,#bdbdbd 100%);box-shadow:0 1px 2px rgba(0,0,0,.5), inset 8px 0 8px -6px rgba(0,0,0,.18), inset -8px 0 8px -6px rgba(0,0,0,.18), inset 0 -6px 6px -4px rgba(0,0,0,.15)"></div>
<svg class="a" style="left:465px;top:210px" width="55" height="52" viewBox="465 210 55 52">
 <defs><linearGradient id="ag" x1="0" y1="0" x2="1" y2="1"><stop offset="0" stop-color="#9aa3ae"/><stop offset="0.45" stop-color="#5d6570"/><stop offset="1" stop-color="#1e1e1e"/></linearGradient></defs>
 <path d="M480.2 229.7 L495.1 217.8 V226 H503 Q515 226 515 239.8 Q515 253.5 503 253.5 H487.7 V246.8 H503 Q509.6 246.8 509.6 240.5 Q509.6 234.5 503 234.5 H495.1 V241 Z" fill="url(#ag)" stroke="#3a3a3a" stroke-width="0.5"/>
 <path d="M487.3 234.5 L495.1 234.5 V241 Z" fill="#111"/>
</svg>
<div class="t" style="left:522px;top:223px;font-size:12px;font-weight:bold;font-style:italic;color:#111">Menüye</div>
<div class="t" style="left:534px;top:239px;font-size:12px;font-weight:bold;font-style:italic;color:#111">Dön</div>

<div class="t" style="left:959px;top:213px;font-size:42px;color:#fff;-webkit-text-stroke:0.8px #fff;text-shadow:1px 3px 4px rgba(0,0,0,.45);transform-origin:0 0;transform:scaleX(1)">s</div>
<div class="t" style="left:1005px;top:213px;font-size:42px;color:#fff;-webkit-text-stroke:0.8px #fff;text-shadow:1px 3px 4px rgba(0,0,0,.45);transform-origin:0 0;transform:scaleX(1.13)">m</div>
<div class="t" style="left:1046px;top:213px;font-size:42px;color:#fff;-webkit-text-stroke:0.8px #fff;text-shadow:1px 3px 4px rgba(0,0,0,.45);transform-origin:0 0;transform:scaleX(1.05)">e</div>
<div class="t" style="left:1073px;top:213px;font-size:42px;color:#fff;-webkit-text-stroke:0.8px #fff;text-shadow:1px 3px 4px rgba(0,0,0,.45);transform-origin:0 0;transform:scaleX(1)">k</div>
<div class="t" style="left:1093px;top:213px;font-size:42px;color:#fff;-webkit-text-stroke:0.8px #fff;text-shadow:1px 3px 4px rgba(0,0,0,.45);transform-origin:0 0;transform:scaleX(0.95)">a</div>
<svg class="a" style="left:978px;top:222px" width="30" height="30" viewBox="0 0 30 30"><circle cx="14" cy="14" r="11.5" fill="#fff" style="filter:drop-shadow(1px 3px 2px rgba(0,0,0,.4))"/><circle cx="14" cy="14.5" r="6" fill="#44546a"/><path d="M11 17.5 V15 M13.5 17.5 V12.5 M16 17.5 V10.5" stroke="#fff" stroke-width="1.5"/></svg>

<div class="a" style="left:102px;top:277px;width:322px;height:29px;background:#2f5597"></div>
<div class="a" style="left:102px;top:306px;width:322px;height:29px;background:#4472c4"></div>
<div class="a" style="left:241px;top:306px;width:52px;height:29px;background:#ff6161"></div>
<div class="a" style="left:293px;top:306px;width:69px;height:29px;background:#ffd966"></div>
<div class="a" style="left:362px;top:306px;width:62px;height:29px;background:#a9d08e"></div>
<div class="t" style="left:102px;top:285px;width:322px;text-align:center;font-size:17px;font-weight:bold;color:#fff"><span style="display:inline-block;transform:scaleX(0.87)">EKİP ÜYELERİ</span></div>
<div class="t" style="left:103px;top:315px;width:46px;text-align:center;font-size:13.6px;font-weight:bold;color:#fff;letter-spacing:-0.5px">#</div>
<div class="t" style="left:152px;top:315px;font-size:13.6px;font-weight:bold;color:#fff;letter-spacing:-0.5px">İsim Soyisim</div>
<div class="t" style="left:241px;top:319px;width:52px;text-align:center;font-size:9.3px;font-weight:bold;color:#111">Başlamadı</div>
<div class="t" style="left:293px;top:319px;width:69px;text-align:center;font-size:9.3px;font-weight:bold;color:#111">Devam Ediyor</div>
<div class="t" style="left:362px;top:319px;width:62px;text-align:center;font-size:9.3px;font-weight:bold;color:#111">Tamamlandı</div>
<div class="a" style="left:429px;top:277px;width:705px;height:29px;background:#2f5597"></div>
<div class="a" style="left:429px;top:306px;width:705px;height:29px;background:#4472c4"></div>
<div class="t" style="left:429px;top:285px;width:705px;text-align:center;font-size:17px;font-weight:bold;color:#fff"><span style="display:inline-block;transform:scaleX(0.96)">İŞ ATAMA TABLOSU</span></div>
<div class="t" style="left:433px;top:315px;font-size:13.6px;font-weight:bold;color:#fff;letter-spacing:-0.5px">İş No</div>
<div class="t" style="left:470px;top:315px;font-size:13.6px;font-weight:bold;color:#fff;letter-spacing:-0.5px">İş Tanımı</div>
<div class="t" style="left:866px;top:315px;font-size:13.6px;font-weight:bold;color:#fff;letter-spacing:-0.5px">Atanan Kişi</div>
<div class="t" style="left:955px;top:315px;width:93px;text-align:center;font-size:13.6px;font-weight:bold;color:#fff;letter-spacing:-0.5px">Atama Tarihi</div>
<div class="t" style="left:1047px;top:315px;width:87px;text-align:center;font-size:13.6px;font-weight:bold;color:#fff;letter-spacing:-0.5px">Termin Tarihi</div>
<div class="a" style="left:102px;top:335px;width:47px;height:365px;background:#f2f2f2"></div>
<div class="a" style="left:241px;top:335px;width:182px;height:365px;background:#f2f2f2"></div>
<div class="a" style="left:429px;top:335px;width:38px;height:365px;background:#f2f2f2"></div>
<div class="a" style="left:102px;top:335px;width:1px;height:365px;background:#4472c4"></div>
<div class="a" style="left:149px;top:335px;width:1px;height:365px;background:#4472c4"></div>
<div class="a" style="left:241px;top:335px;width:1px;height:365px;background:#4472c4"></div>
<div class="a" style="left:293px;top:335px;width:1px;height:365px;background:#4472c4"></div>
<div class="a" style="left:362px;top:335px;width:1px;height:365px;background:#4472c4"></div>
<div class="a" style="left:423px;top:335px;width:1px;height:365px;background:#4472c4"></div>
<div class="a" style="left:429px;top:335px;width:1px;height:365px;background:#4472c4"></div>
<div class="a" style="left:467px;top:335px;width:1px;height:365px;background:#4472c4"></div>
<div class="a" style="left:863px;top:335px;width:1px;height:365px;background:#4472c4"></div>
<div class="a" style="left:955px;top:335px;width:1px;height:365px;background:#4472c4"></div>
<div class="a" style="left:1047px;top:335px;width:1px;height:365px;background:#4472c4"></div>
<div class="a" style="left:1133px;top:335px;width:1px;height:365px;background:#4472c4"></div>
<div class="a" style="left:102px;top:355px;width:322px;height:1px;background:#4472c4"></div>
<div class="a" style="left:429px;top:355px;width:705px;height:1px;background:#4472c4"></div>
<div class="a" style="left:102px;top:375px;width:322px;height:1px;background:#4472c4"></div>
<div class="a" style="left:429px;top:375px;width:705px;height:1px;background:#4472c4"></div>
<div class="a" style="left:102px;top:395px;width:322px;height:1px;background:#4472c4"></div>
<div class="a" style="left:429px;top:395px;width:705px;height:1px;background:#4472c4"></div>
<div class="a" style="left:102px;top:415px;width:322px;height:1px;background:#4472c4"></div>
<div class="a" style="left:429px;top:415px;width:705px;height:1px;background:#4472c4"></div>
<div class="a" style="left:102px;top:435px;width:322px;height:1px;background:#4472c4"></div>
<div class="a" style="left:429px;top:435px;width:705px;height:1px;background:#4472c4"></div>
<div class="a" style="left:102px;top:455px;width:322px;height:1px;background:#4472c4"></div>
<div class="a" style="left:429px;top:455px;width:705px;height:1px;background:#4472c4"></div>
<div class="a" style="left:102px;top:475px;width:322px;height:1px;background:#4472c4"></div>
<div class="a" style="left:429px;top:475px;width:705px;height:1px;background:#4472c4"></div>
<div class="a" style="left:102px;top:495px;width:322px;height:1px;background:#4472c4"></div>
<div class="a" style="left:429px;top:495px;width:705px;height:1px;background:#4472c4"></div>
<div class="a" style="left:102px;top:515px;width:322px;height:1px;background:#4472c4"></div>
<div class="a" style="left:429px;top:515px;width:705px;height:1px;background:#4472c4"></div>
<div class="a" style="left:102px;top:535px;width:322px;height:1px;background:#4472c4"></div>
<div class="a" style="left:429px;top:535px;width:705px;height:1px;background:#4472c4"></div>
<div class="a" style="left:102px;top:555px;width:322px;height:1px;background:#4472c4"></div>
<div class="a" style="left:429px;top:555px;width:705px;height:1px;background:#4472c4"></div>
<div class="a" style="left:102px;top:575px;width:322px;height:1px;background:#4472c4"></div>
<div class="a" style="left:429px;top:575px;width:705px;height:1px;background:#4472c4"></div>
<div class="a" style="left:102px;top:595px;width:322px;height:1px;background:#4472c4"></div>
<div class="a" style="left:429px;top:595px;width:705px;height:1px;background:#4472c4"></div>
<div class="a" style="left:102px;top:615px;width:322px;height:1px;background:#4472c4"></div>
<div class="a" style="left:429px;top:615px;width:705px;height:1px;background:#4472c4"></div>
<div class="a" style="left:102px;top:635px;width:322px;height:1px;background:#4472c4"></div>
<div class="a" style="left:429px;top:635px;width:705px;height:1px;background:#4472c4"></div>
<div class="a" style="left:102px;top:655px;width:322px;height:1px;background:#4472c4"></div>
<div class="a" style="left:429px;top:655px;width:705px;height:1px;background:#4472c4"></div>
<div class="a" style="left:102px;top:675px;width:322px;height:1px;background:#4472c4"></div>
<div class="a" style="left:429px;top:675px;width:705px;height:1px;background:#4472c4"></div>
<div class="a" style="left:102px;top:695px;width:322px;height:1px;background:#4472c4"></div>
<div class="a" style="left:429px;top:695px;width:705px;height:1px;background:#4472c4"></div>
<div class="t" style="left:102px;top:335px;width:47px;text-align:center;font-size:13.6px;color:#000;line-height:20px;height:20px;padding-top:2px;-webkit-text-stroke:0.15px #000;">1</div>
<div class="t" style="left:152px;top:335px;font-size:13.6px;color:#000;line-height:20px;height:20px;padding-top:2px;-webkit-text-stroke:0.15px #000;transform-origin:0 0;transform:scaleX(0.94)">Yavuz Teke</div>
<div class="t" style="left:241px;top:335px;width:52px;text-align:center;font-size:13.6px;color:#000;line-height:20px;height:20px;padding-top:2px;-webkit-text-stroke:0.15px #000;">1</div>
<div class="t" style="left:293px;top:335px;width:69px;text-align:center;font-size:13.6px;color:#000;line-height:20px;height:20px;padding-top:2px;-webkit-text-stroke:0.15px #000;">2</div>
<div class="t" style="left:362px;top:335px;width:61px;text-align:center;font-size:13.6px;color:#000;line-height:20px;height:20px;padding-top:2px;-webkit-text-stroke:0.15px #000;">3</div>
<div class="t" style="left:102px;top:355px;width:47px;text-align:center;font-size:13.6px;color:#000;line-height:20px;height:20px;padding-top:2px;-webkit-text-stroke:0.15px #000;">2</div>
<div class="t" style="left:152px;top:355px;font-size:13.6px;color:#000;line-height:20px;height:20px;padding-top:2px;-webkit-text-stroke:0.15px #000;transform-origin:0 0;transform:scaleX(0.94)">Fadime Nacar</div>
<div class="t" style="left:241px;top:355px;width:52px;text-align:center;font-size:13.6px;color:#000;line-height:20px;height:20px;padding-top:2px;-webkit-text-stroke:0.15px #000;">2</div>
<div class="t" style="left:293px;top:355px;width:69px;text-align:center;font-size:13.6px;color:#000;line-height:20px;height:20px;padding-top:2px;-webkit-text-stroke:0.15px #000;">1</div>
<div class="t" style="left:362px;top:355px;width:61px;text-align:center;font-size:13.6px;color:#000;line-height:20px;height:20px;padding-top:2px;-webkit-text-stroke:0.15px #000;">3</div>
<div class="t" style="left:102px;top:375px;width:47px;text-align:center;font-size:13.6px;color:#000;line-height:20px;height:20px;padding-top:2px;-webkit-text-stroke:0.15px #000;">3</div>
<div class="t" style="left:152px;top:375px;font-size:13.6px;color:#000;line-height:20px;height:20px;padding-top:2px;-webkit-text-stroke:0.15px #000;transform-origin:0 0;transform:scaleX(0.94)">Direnç Barış</div>
<div class="t" style="left:241px;top:375px;width:52px;text-align:center;font-size:13.6px;color:#000;line-height:20px;height:20px;padding-top:2px;-webkit-text-stroke:0.15px #000;">1</div>
<div class="t" style="left:293px;top:375px;width:69px;text-align:center;font-size:13.6px;color:#000;line-height:20px;height:20px;padding-top:2px;-webkit-text-stroke:0.15px #000;">4</div>
<div class="t" style="left:362px;top:375px;width:61px;text-align:center;font-size:13.6px;color:#000;line-height:20px;height:20px;padding-top:2px;-webkit-text-stroke:0.15px #000;">2</div>
<div class="t" style="left:102px;top:395px;width:47px;text-align:center;font-size:13.6px;color:#000;line-height:20px;height:20px;padding-top:2px;-webkit-text-stroke:0.15px #000;">4</div>
<div class="t" style="left:152px;top:395px;font-size:13.6px;color:#000;line-height:20px;height:20px;padding-top:2px;-webkit-text-stroke:0.15px #000;transform-origin:0 0;transform:scaleX(0.94)">Aslı Karga</div>
<div class="t" style="left:241px;top:395px;width:52px;text-align:center;font-size:13.6px;color:#000;line-height:20px;height:20px;padding-top:2px;-webkit-text-stroke:0.15px #000;">2</div>
<div class="t" style="left:293px;top:395px;width:69px;text-align:center;font-size:13.6px;color:#000;line-height:20px;height:20px;padding-top:2px;-webkit-text-stroke:0.15px #000;">1</div>
<div class="t" style="left:362px;top:395px;width:61px;text-align:center;font-size:13.6px;color:#000;line-height:20px;height:20px;padding-top:2px;-webkit-text-stroke:0.15px #000;">2</div>
<div class="t" style="left:102px;top:415px;width:47px;text-align:center;font-size:13.6px;color:#000;line-height:20px;height:20px;padding-top:2px;-webkit-text-stroke:0.15px #000;">5</div>
<div class="t" style="left:152px;top:415px;font-size:13.6px;color:#000;line-height:20px;height:20px;padding-top:2px;-webkit-text-stroke:0.15px #000;transform-origin:0 0;transform:scaleX(0.94)">Gülay Terzi</div>
<div class="t" style="left:241px;top:415px;width:52px;text-align:center;font-size:13.6px;color:#000;line-height:20px;height:20px;padding-top:2px;-webkit-text-stroke:0.15px #000;">2</div>
<div class="t" style="left:293px;top:415px;width:69px;text-align:center;font-size:13.6px;color:#000;line-height:20px;height:20px;padding-top:2px;-webkit-text-stroke:0.15px #000;">1</div>
<div class="t" style="left:362px;top:415px;width:61px;text-align:center;font-size:13.6px;color:#000;line-height:20px;height:20px;padding-top:2px;-webkit-text-stroke:0.15px #000;">4</div>
<div class="t" style="left:102px;top:435px;width:47px;text-align:center;font-size:13.6px;color:#000;line-height:20px;height:20px;padding-top:2px;-webkit-text-stroke:0.15px #000;">6</div>
<div class="t" style="left:152px;top:435px;font-size:13.6px;color:#000;line-height:20px;height:20px;padding-top:2px;-webkit-text-stroke:0.15px #000;transform-origin:0 0;transform:scaleX(0.94)">Cemal Küçük</div>
<div class="t" style="left:241px;top:435px;width:52px;text-align:center;font-size:13.6px;color:#000;line-height:20px;height:20px;padding-top:2px;-webkit-text-stroke:0.15px #000;">2</div>
<div class="t" style="left:293px;top:435px;width:69px;text-align:center;font-size:13.6px;color:#000;line-height:20px;height:20px;padding-top:2px;-webkit-text-stroke:0.15px #000;">1</div>
<div class="t" style="left:362px;top:435px;width:61px;text-align:center;font-size:13.6px;color:#000;line-height:20px;height:20px;padding-top:2px;-webkit-text-stroke:0.15px #000;">3</div>
<div class="t" style="left:102px;top:455px;width:47px;text-align:center;font-size:13.6px;color:#000;line-height:20px;height:20px;padding-top:2px;-webkit-text-stroke:0.15px #000;">7</div>
<div class="t" style="left:152px;top:455px;font-size:13.6px;color:#000;line-height:20px;height:20px;padding-top:2px;-webkit-text-stroke:0.15px #000;transform-origin:0 0;transform:scaleX(0.94)">Doruk Tiryaki</div>
<div class="t" style="left:241px;top:455px;width:52px;text-align:center;font-size:13.6px;color:#000;line-height:20px;height:20px;padding-top:2px;-webkit-text-stroke:0.15px #000;">1</div>
<div class="t" style="left:293px;top:455px;width:69px;text-align:center;font-size:13.6px;color:#000;line-height:20px;height:20px;padding-top:2px;-webkit-text-stroke:0.15px #000;">1</div>
<div class="t" style="left:362px;top:455px;width:61px;text-align:center;font-size:13.6px;color:#000;line-height:20px;height:20px;padding-top:2px;-webkit-text-stroke:0.15px #000;">3</div>
<div class="t" style="left:102px;top:475px;width:47px;text-align:center;font-size:13.6px;color:#000;line-height:20px;height:20px;padding-top:2px;-webkit-text-stroke:0.15px #000;">8</div>
<div class="t" style="left:152px;top:475px;font-size:13.6px;color:#000;line-height:20px;height:20px;padding-top:2px;-webkit-text-stroke:0.15px #000;transform-origin:0 0;transform:scaleX(0.94)">Beyza Peynirci</div>
<div class="t" style="left:241px;top:475px;width:52px;text-align:center;font-size:13.6px;color:#000;line-height:20px;height:20px;padding-top:2px;-webkit-text-stroke:0.15px #000;">2</div>
<div class="t" style="left:293px;top:475px;width:69px;text-align:center;font-size:13.6px;color:#000;line-height:20px;height:20px;padding-top:2px;-webkit-text-stroke:0.15px #000;">3</div>
<div class="t" style="left:362px;top:475px;width:61px;text-align:center;font-size:13.6px;color:#000;line-height:20px;height:20px;padding-top:2px;-webkit-text-stroke:0.15px #000;">1</div>
<div class="t" style="left:102px;top:495px;width:47px;text-align:center;font-size:13.6px;color:#000;line-height:20px;height:20px;padding-top:2px;-webkit-text-stroke:0.15px #000;">9</div>
<div class="t" style="left:152px;top:495px;font-size:13.6px;color:#000;line-height:20px;height:20px;padding-top:2px;-webkit-text-stroke:0.15px #000;transform-origin:0 0;transform:scaleX(0.94)">Gülnur Barış</div>
<div class="t" style="left:241px;top:495px;width:52px;text-align:center;font-size:13.6px;color:#000;line-height:20px;height:20px;padding-top:2px;-webkit-text-stroke:0.15px #000;">0</div>
<div class="t" style="left:293px;top:495px;width:69px;text-align:center;font-size:13.6px;color:#000;line-height:20px;height:20px;padding-top:2px;-webkit-text-stroke:0.15px #000;">2</div>
<div class="t" style="left:362px;top:495px;width:61px;text-align:center;font-size:13.6px;color:#000;line-height:20px;height:20px;padding-top:2px;-webkit-text-stroke:0.15px #000;">4</div>
<div class="t" style="left:102px;top:515px;width:47px;text-align:center;font-size:13.6px;color:#000;line-height:20px;height:20px;padding-top:2px;-webkit-text-stroke:0.15px #000;">10</div>
<div class="t" style="left:152px;top:515px;font-size:13.6px;color:#000;line-height:20px;height:20px;padding-top:2px;-webkit-text-stroke:0.15px #000;transform-origin:0 0;transform:scaleX(0.94)">Mehveş Sadık</div>
<div class="t" style="left:241px;top:515px;width:52px;text-align:center;font-size:13.6px;color:#000;line-height:20px;height:20px;padding-top:2px;-webkit-text-stroke:0.15px #000;">0</div>
<div class="t" style="left:293px;top:515px;width:69px;text-align:center;font-size:13.6px;color:#000;line-height:20px;height:20px;padding-top:2px;-webkit-text-stroke:0.15px #000;">4</div>
<div class="t" style="left:362px;top:515px;width:61px;text-align:center;font-size:13.6px;color:#000;line-height:20px;height:20px;padding-top:2px;-webkit-text-stroke:0.15px #000;">2</div>
<div class="t" style="left:429px;top:335px;width:38px;text-align:center;font-size:13.6px;color:#000;line-height:20px;height:20px;padding-top:2px;-webkit-text-stroke:0.15px #000;">1</div>
<div class="t" style="left:470px;top:335px;font-size:13.6px;color:#000;line-height:20px;height:20px;padding-top:2px;-webkit-text-stroke:0.15px #000;font-size:13.7px">Kişisel yapılacaklar listesini tamamlayın</div>
<div class="t" style="left:866px;top:335px;font-size:13.6px;color:#000;line-height:20px;height:20px;padding-top:2px;-webkit-text-stroke:0.15px #000;transform-origin:0 0;transform:scaleX(0.94)">Yavuz Teke</div>
<div class="t" style="left:955px;top:335px;width:92px;text-align:center;font-size:13.6px;color:#000;line-height:20px;height:20px;padding-top:2px;-webkit-text-stroke:0.15px #000;letter-spacing:-0.2px">09/12/2023</div>
<div class="t" style="left:1047px;top:335px;width:86px;text-align:center;font-size:13.6px;color:#000;line-height:20px;height:20px;padding-top:2px;-webkit-text-stroke:0.15px #000;letter-spacing:-0.2px">15/12/2023</div>
<div class="t" style="left:429px;top:355px;width:38px;text-align:center;font-size:13.6px;color:#000;line-height:20px;height:20px;padding-top:2px;-webkit-text-stroke:0.15px #000;">2</div>
<div class="t" style="left:470px;top:355px;font-size:13.6px;color:#000;line-height:20px;height:20px;padding-top:2px;-webkit-text-stroke:0.15px #000;font-size:13.7px">Bir öz geçmiş şablonu oluşturun</div>
<div class="t" style="left:866px;top:355px;font-size:13.6px;color:#000;line-height:20px;height:20px;padding-top:2px;-webkit-text-stroke:0.15px #000;transform-origin:0 0;transform:scaleX(0.94)">Yavuz Teke</div>
<div class="t" style="left:955px;top:355px;width:92px;text-align:center;font-size:13.6px;color:#000;line-height:20px;height:20px;padding-top:2px;-webkit-text-stroke:0.15px #000;letter-spacing:-0.2px">22/06/2023</div>
<div class="t" style="left:1047px;top:355px;width:86px;text-align:center;font-size:13.6px;color:#000;line-height:20px;height:20px;padding-top:2px;-webkit-text-stroke:0.15px #000;letter-spacing:-0.2px">03/10/2023</div>
<div class="t" style="left:429px;top:375px;width:38px;text-align:center;font-size:13.6px;color:#000;line-height:20px;height:20px;padding-top:2px;-webkit-text-stroke:0.15px #000;">3</div>
<div class="t" style="left:470px;top:375px;font-size:13.6px;color:#000;line-height:20px;height:20px;padding-top:2px;-webkit-text-stroke:0.15px #000;font-size:13.7px">Çalışan el kitabını yazmayı bitirin</div>
<div class="t" style="left:866px;top:375px;font-size:13.6px;color:#000;line-height:20px;height:20px;padding-top:2px;-webkit-text-stroke:0.15px #000;transform-origin:0 0;transform:scaleX(0.94)">Fadime Nacar</div>
<div class="t" style="left:955px;top:375px;width:92px;text-align:center;font-size:13.6px;color:#000;line-height:20px;height:20px;padding-top:2px;-webkit-text-stroke:0.15px #000;letter-spacing:-0.2px">13/02/2023</div>
<div class="t" style="left:1047px;top:375px;width:86px;text-align:center;font-size:13.6px;color:#000;line-height:20px;height:20px;padding-top:2px;-webkit-text-stroke:0.15px #000;letter-spacing:-0.2px">25/10/2023</div>
<div class="t" style="left:429px;top:395px;width:38px;text-align:center;font-size:13.6px;color:#000;line-height:20px;height:20px;padding-top:2px;-webkit-text-stroke:0.15px #000;">4</div>
<div class="t" style="left:470px;top:395px;font-size:13.6px;color:#000;line-height:20px;height:20px;padding-top:2px;-webkit-text-stroke:0.15px #000;font-size:13.7px">Bir mali aylık raporlama şablonu oluşturun</div>
<div class="t" style="left:866px;top:395px;font-size:13.6px;color:#000;line-height:20px;height:20px;padding-top:2px;-webkit-text-stroke:0.15px #000;transform-origin:0 0;transform:scaleX(0.94)">Fadime Nacar</div>
<div class="t" style="left:955px;top:395px;width:92px;text-align:center;font-size:13.6px;color:#000;line-height:20px;height:20px;padding-top:2px;-webkit-text-stroke:0.15px #000;letter-spacing:-0.2px">13/02/2023</div>
<div class="t" style="left:1047px;top:395px;width:86px;text-align:center;font-size:13.6px;color:#000;line-height:20px;height:20px;padding-top:2px;-webkit-text-stroke:0.15px #000;letter-spacing:-0.2px">25/10/2023</div>
<div class="t" style="left:429px;top:415px;width:38px;text-align:center;font-size:13.6px;color:#000;line-height:20px;height:20px;padding-top:2px;-webkit-text-stroke:0.15px #000;">5</div>
<div class="t" style="left:470px;top:415px;font-size:13.6px;color:#000;line-height:20px;height:20px;padding-top:2px;-webkit-text-stroke:0.15px #000;font-size:13.7px">Excel&#x27;de bir envanter yönetimi aracı geliştirin</div>
<div class="t" style="left:866px;top:415px;font-size:13.6px;color:#000;line-height:20px;height:20px;padding-top:2px;-webkit-text-stroke:0.15px #000;transform-origin:0 0;transform:scaleX(0.94)">Direnç Barış</div>
<div class="t" style="left:955px;top:415px;width:92px;text-align:center;font-size:13.6px;color:#000;line-height:20px;height:20px;padding-top:2px;-webkit-text-stroke:0.15px #000;letter-spacing:-0.2px">23/01/2023</div>
<div class="t" style="left:1047px;top:415px;width:86px;text-align:center;font-size:13.6px;color:#000;line-height:20px;height:20px;padding-top:2px;-webkit-text-stroke:0.15px #000;letter-spacing:-0.2px">01/07/2023</div>
<div class="t" style="left:429px;top:435px;width:38px;text-align:center;font-size:13.6px;color:#000;line-height:20px;height:20px;padding-top:2px;-webkit-text-stroke:0.15px #000;">6</div>
<div class="t" style="left:470px;top:435px;font-size:13.6px;color:#000;line-height:20px;height:20px;padding-top:2px;-webkit-text-stroke:0.15px #000;font-size:13.7px">Yazdırılabilir fatura şablonunu geliştirmeyi tamamlayın</div>
<div class="t" style="left:866px;top:435px;font-size:13.6px;color:#000;line-height:20px;height:20px;padding-top:2px;-webkit-text-stroke:0.15px #000;transform-origin:0 0;transform:scaleX(0.94)">Aslı Karga</div>
<div class="t" style="left:955px;top:435px;width:92px;text-align:center;font-size:13.6px;color:#000;line-height:20px;height:20px;padding-top:2px;-webkit-text-stroke:0.15px #000;letter-spacing:-0.2px">09/05/2023</div>
<div class="t" style="left:1047px;top:435px;width:86px;text-align:center;font-size:13.6px;color:#000;line-height:20px;height:20px;padding-top:2px;-webkit-text-stroke:0.15px #000;letter-spacing:-0.2px">16/05/2023</div>
<div class="t" style="left:429px;top:455px;width:38px;text-align:center;font-size:13.6px;color:#000;line-height:20px;height:20px;padding-top:2px;-webkit-text-stroke:0.15px #000;">7</div>
<div class="t" style="left:470px;top:455px;font-size:13.6px;color:#000;line-height:20px;height:20px;padding-top:2px;-webkit-text-stroke:0.15px #000;font-size:13.7px">Bir çalışan devam yönetimi aracı oluşturun</div>
<div class="t" style="left:866px;top:455px;font-size:13.6px;color:#000;line-height:20px;height:20px;padding-top:2px;-webkit-text-stroke:0.15px #000;transform-origin:0 0;transform:scaleX(0.94)">Aslı Karga</div>
<div class="t" style="left:955px;top:455px;width:92px;text-align:center;font-size:13.6px;color:#000;line-height:20px;height:20px;padding-top:2px;-webkit-text-stroke:0.15px #000;letter-spacing:-0.2px">12/01/2023</div>
<div class="t" style="left:1047px;top:455px;width:86px;text-align:center;font-size:13.6px;color:#000;line-height:20px;height:20px;padding-top:2px;-webkit-text-stroke:0.15px #000;letter-spacing:-0.2px">15/03/2023</div>
<div class="t" style="left:429px;top:475px;width:38px;text-align:center;font-size:13.6px;color:#000;line-height:20px;height:20px;padding-top:2px;-webkit-text-stroke:0.15px #000;">8</div>
<div class="t" style="left:470px;top:475px;font-size:13.6px;color:#000;line-height:20px;height:20px;padding-top:2px;-webkit-text-stroke:0.15px #000;font-size:13.7px">Öğrenci ders planını tamamlayın</div>
<div class="t" style="left:866px;top:475px;font-size:13.6px;color:#000;line-height:20px;height:20px;padding-top:2px;-webkit-text-stroke:0.15px #000;transform-origin:0 0;transform:scaleX(0.94)">Aslı Karga</div>
<div class="t" style="left:955px;top:475px;width:92px;text-align:center;font-size:13.6px;color:#000;line-height:20px;height:20px;padding-top:2px;-webkit-text-stroke:0.15px #000;letter-spacing:-0.2px">05/01/2023</div>
<div class="t" style="left:1047px;top:475px;width:86px;text-align:center;font-size:13.6px;color:#000;line-height:20px;height:20px;padding-top:2px;-webkit-text-stroke:0.15px #000;letter-spacing:-0.2px">10/01/2023</div>
<div class="t" style="left:429px;top:495px;width:38px;text-align:center;font-size:13.6px;color:#000;line-height:20px;height:20px;padding-top:2px;-webkit-text-stroke:0.15px #000;">9</div>
<div class="t" style="left:470px;top:495px;font-size:13.6px;color:#000;line-height:20px;height:20px;padding-top:2px;-webkit-text-stroke:0.15px #000;font-size:13.7px">Someka&#x27;nın internet sitesini ziyaret edin</div>
<div class="t" style="left:866px;top:495px;font-size:13.6px;color:#000;line-height:20px;height:20px;padding-top:2px;-webkit-text-stroke:0.15px #000;transform-origin:0 0;transform:scaleX(0.94)">Gülay Terzi</div>
<div class="t" style="left:955px;top:495px;width:92px;text-align:center;font-size:13.6px;color:#000;line-height:20px;height:20px;padding-top:2px;-webkit-text-stroke:0.15px #000;letter-spacing:-0.2px">02/05/2023</div>
<div class="t" style="left:1047px;top:495px;width:86px;text-align:center;font-size:13.6px;color:#000;line-height:20px;height:20px;padding-top:2px;-webkit-text-stroke:0.15px #000;letter-spacing:-0.2px">19/06/2023</div>
<div class="t" style="left:429px;top:515px;width:38px;text-align:center;font-size:13.6px;color:#000;line-height:20px;height:20px;padding-top:2px;-webkit-text-stroke:0.15px #000;">10</div>
<div class="t" style="left:470px;top:515px;font-size:13.6px;color:#000;line-height:20px;height:20px;padding-top:2px;-webkit-text-stroke:0.15px #000;font-size:13.7px">Ücretsiz ve ücretli ürünlerimizi kontrol edin</div>
<div class="t" style="left:866px;top:515px;font-size:13.6px;color:#000;line-height:20px;height:20px;padding-top:2px;-webkit-text-stroke:0.15px #000;transform-origin:0 0;transform:scaleX(0.94)">Gülay Terzi</div>
<div class="t" style="left:955px;top:515px;width:92px;text-align:center;font-size:13.6px;color:#000;line-height:20px;height:20px;padding-top:2px;-webkit-text-stroke:0.15px #000;letter-spacing:-0.2px">22/05/2023</div>
<div class="t" style="left:1047px;top:515px;width:86px;text-align:center;font-size:13.6px;color:#000;line-height:20px;height:20px;padding-top:2px;-webkit-text-stroke:0.15px #000;letter-spacing:-0.2px">06/05/2023</div>
<div class="t" style="left:429px;top:535px;width:38px;text-align:center;font-size:13.6px;color:#000;line-height:20px;height:20px;padding-top:2px;-webkit-text-stroke:0.15px #000;">11</div>
<div class="t" style="left:470px;top:535px;font-size:13.6px;color:#000;line-height:20px;height:20px;padding-top:2px;-webkit-text-stroke:0.15px #000;font-size:13.7px">Ürünlerimizi sosyal medyada paylaşın</div>
<div class="t" style="left:866px;top:535px;font-size:13.6px;color:#000;line-height:20px;height:20px;padding-top:2px;-webkit-text-stroke:0.15px #000;transform-origin:0 0;transform:scaleX(0.94)">Direnç Barış</div>
<div class="t" style="left:955px;top:535px;width:92px;text-align:center;font-size:13.6px;color:#000;line-height:20px;height:20px;padding-top:2px;-webkit-text-stroke:0.15px #000;letter-spacing:-0.2px">01/02/2023</div>
<div class="t" style="left:1047px;top:535px;width:86px;text-align:center;font-size:13.6px;color:#000;line-height:20px;height:20px;padding-top:2px;-webkit-text-stroke:0.15px #000;letter-spacing:-0.2px">05/04/2023</div>
<div class="t" style="left:429px;top:555px;width:38px;text-align:center;font-size:13.6px;color:#000;line-height:20px;height:20px;padding-top:2px;-webkit-text-stroke:0.15px #000;">12</div>
<div class="t" style="left:470px;top:555px;font-size:13.6px;color:#000;line-height:20px;height:20px;padding-top:2px;-webkit-text-stroke:0.15px #000;font-size:13.7px">Tıklama oranını %0,1 artırın</div>
<div class="t" style="left:866px;top:555px;font-size:13.6px;color:#000;line-height:20px;height:20px;padding-top:2px;-webkit-text-stroke:0.15px #000;transform-origin:0 0;transform:scaleX(0.94)">Cemal Küçük</div>
<div class="t" style="left:955px;top:555px;width:92px;text-align:center;font-size:13.6px;color:#000;line-height:20px;height:20px;padding-top:2px;-webkit-text-stroke:0.15px #000;letter-spacing:-0.2px">07/07/2023</div>
<div class="t" style="left:1047px;top:555px;width:86px;text-align:center;font-size:13.6px;color:#000;line-height:20px;height:20px;padding-top:2px;-webkit-text-stroke:0.15px #000;letter-spacing:-0.2px">29/07/2023</div>
<div class="t" style="left:429px;top:575px;width:38px;text-align:center;font-size:13.6px;color:#000;line-height:20px;height:20px;padding-top:2px;-webkit-text-stroke:0.15px #000;">13</div>
<div class="t" style="left:470px;top:575px;font-size:13.6px;color:#000;line-height:20px;height:20px;padding-top:2px;-webkit-text-stroke:0.15px #000;font-size:13.7px">Masaları temizleyin</div>
<div class="t" style="left:866px;top:575px;font-size:13.6px;color:#000;line-height:20px;height:20px;padding-top:2px;-webkit-text-stroke:0.15px #000;transform-origin:0 0;transform:scaleX(0.94)">Doruk Tiryaki</div>
<div class="t" style="left:955px;top:575px;width:92px;text-align:center;font-size:13.6px;color:#000;line-height:20px;height:20px;padding-top:2px;-webkit-text-stroke:0.15px #000;letter-spacing:-0.2px">20/07/2023</div>
<div class="t" style="left:1047px;top:575px;width:86px;text-align:center;font-size:13.6px;color:#000;line-height:20px;height:20px;padding-top:2px;-webkit-text-stroke:0.15px #000;letter-spacing:-0.2px">23/09/2023</div>
<div class="t" style="left:429px;top:595px;width:38px;text-align:center;font-size:13.6px;color:#000;line-height:20px;height:20px;padding-top:2px;-webkit-text-stroke:0.15px #000;">14</div>
<div class="t" style="left:470px;top:595px;font-size:13.6px;color:#000;line-height:20px;height:20px;padding-top:2px;-webkit-text-stroke:0.15px #000;font-size:13.7px">Alt kattaki sandalyeleri alın</div>
<div class="t" style="left:866px;top:595px;font-size:13.6px;color:#000;line-height:20px;height:20px;padding-top:2px;-webkit-text-stroke:0.15px #000;transform-origin:0 0;transform:scaleX(0.94)">Fadime Nacar</div>
<div class="t" style="left:955px;top:595px;width:92px;text-align:center;font-size:13.6px;color:#000;line-height:20px;height:20px;padding-top:2px;-webkit-text-stroke:0.15px #000;letter-spacing:-0.2px">23/05/2023</div>
<div class="t" style="left:1047px;top:595px;width:86px;text-align:center;font-size:13.6px;color:#000;line-height:20px;height:20px;padding-top:2px;-webkit-text-stroke:0.15px #000;letter-spacing:-0.2px">08/10/2023</div>
<div class="t" style="left:429px;top:615px;width:38px;text-align:center;font-size:13.6px;color:#000;line-height:20px;height:20px;padding-top:2px;-webkit-text-stroke:0.15px #000;">15</div>
<div class="t" style="left:470px;top:615px;font-size:13.6px;color:#000;line-height:20px;height:20px;padding-top:2px;-webkit-text-stroke:0.15px #000;font-size:13.7px">Asansörü 11. kata çıkarın ve zemin seviyesine geri dönün</div>
<div class="t" style="left:866px;top:615px;font-size:13.6px;color:#000;line-height:20px;height:20px;padding-top:2px;-webkit-text-stroke:0.15px #000;transform-origin:0 0;transform:scaleX(0.94);font-size:12.8px">Beyza Peynirci</div>
<div class="t" style="left:955px;top:615px;width:92px;text-align:center;font-size:13.6px;color:#000;line-height:20px;height:20px;padding-top:2px;-webkit-text-stroke:0.15px #000;letter-spacing:-0.2px">05/03/2023</div>
<div class="t" style="left:1047px;top:615px;width:86px;text-align:center;font-size:13.6px;color:#000;line-height:20px;height:20px;padding-top:2px;-webkit-text-stroke:0.15px #000;letter-spacing:-0.2px">10/07/2023</div>
<div class="t" style="left:429px;top:635px;width:38px;text-align:center;font-size:13.6px;color:#000;line-height:20px;height:20px;padding-top:2px;-webkit-text-stroke:0.15px #000;">16</div>
<div class="t" style="left:470px;top:635px;font-size:13.6px;color:#000;line-height:20px;height:20px;padding-top:2px;-webkit-text-stroke:0.15px #000;font-size:13.7px">Buraya daha fazla görev yazın</div>
<div class="t" style="left:866px;top:635px;font-size:13.6px;color:#000;line-height:20px;height:20px;padding-top:2px;-webkit-text-stroke:0.15px #000;transform-origin:0 0;transform:scaleX(0.94);font-size:12.8px">Beyza Peynirci</div>
<div class="t" style="left:955px;top:635px;width:92px;text-align:center;font-size:13.6px;color:#000;line-height:20px;height:20px;padding-top:2px;-webkit-text-stroke:0.15px #000;letter-spacing:-0.2px">17/02/2023</div>
<div class="t" style="left:1047px;top:635px;width:86px;text-align:center;font-size:13.6px;color:#000;line-height:20px;height:20px;padding-top:2px;-webkit-text-stroke:0.15px #000;letter-spacing:-0.2px">31/05/2023</div>
<div class="t" style="left:429px;top:655px;width:38px;text-align:center;font-size:13.6px;color:#000;line-height:20px;height:20px;padding-top:2px;-webkit-text-stroke:0.15px #000;">17</div>
<div class="t" style="left:470px;top:655px;font-size:13.6px;color:#000;line-height:20px;height:20px;padding-top:2px;-webkit-text-stroke:0.15px #000;font-size:13.7px">Her ekip üyesi için farklı görevler yazın</div>
<div class="t" style="left:866px;top:655px;font-size:13.6px;color:#000;line-height:20px;height:20px;padding-top:2px;-webkit-text-stroke:0.15px #000;transform-origin:0 0;transform:scaleX(0.94)">Gülnur Barış</div>
<div class="t" style="left:955px;top:655px;width:92px;text-align:center;font-size:13.6px;color:#000;line-height:20px;height:20px;padding-top:2px;-webkit-text-stroke:0.15px #000;letter-spacing:-0.2px">05/05/2023</div>
<div class="t" style="left:1047px;top:655px;width:86px;text-align:center;font-size:13.6px;color:#000;line-height:20px;height:20px;padding-top:2px;-webkit-text-stroke:0.15px #000;letter-spacing:-0.2px">17/04/2023</div>
<div class="t" style="left:429px;top:675px;width:38px;text-align:center;font-size:13.6px;color:#000;line-height:20px;height:20px;padding-top:2px;-webkit-text-stroke:0.15px #000;">18</div>
<div class="t" style="left:470px;top:675px;font-size:13.6px;color:#000;line-height:20px;height:20px;padding-top:2px;-webkit-text-stroke:0.15px #000;font-size:13.7px">Bir ekip çalışması ise benzer veya aynı görevleri yazın</div>
<div class="t" style="left:866px;top:675px;font-size:13.6px;color:#000;line-height:20px;height:20px;padding-top:2px;-webkit-text-stroke:0.15px #000;transform-origin:0 0;transform:scaleX(0.94)">Gülnur Barış</div>
<div class="t" style="left:955px;top:675px;width:92px;text-align:center;font-size:13.6px;color:#000;line-height:20px;height:20px;padding-top:2px;-webkit-text-stroke:0.15px #000;letter-spacing:-0.2px">29/03/2023</div>
<div class="t" style="left:1047px;top:675px;width:86px;text-align:center;font-size:13.6px;color:#000;line-height:20px;height:20px;padding-top:2px;-webkit-text-stroke:0.15px #000;letter-spacing:-0.2px">30/03/2023</div>
<div class="a" style="left:0;top:335px;width:1365px;height:1px;background:#9c9c9c"></div>
<div class="a" style="left:1158px;top:277px;width:95px;height:30px;background:#ffe699;border:1px solid #000"></div>
<div class="t" style="left:1158px;top:286px;width:94px;text-align:center;font-size:13px;font-weight:bold;color:#111;letter-spacing:-0.4px">Tarih Formatı</div>
<div class="a" style="left:1251px;top:276px;width:97px;height:32px;background:#fff;border:2px solid #217346"></div>
<div class="a" style="left:1344px;top:304px;width:5px;height:5px;background:#217346;border:1px solid #fff"></div>
<div class="t" style="left:1251px;top:287px;width:97px;text-align:center;font-size:13.5px;font-weight:bold;color:#111;letter-spacing:-0.3px">gg.aa.yyyy</div>
<div class="a" style="left:1347px;top:288px;width:17px;height:17px;background:#f0f0f0;border:1px solid #c8c8c8"></div>
<svg class="a" style="left:1351px;top:294px" width="9" height="6" viewBox="0 0 9 6"><path d="M0.5 0.5 H8.5 L4.5 5 Z" fill="#777"/></svg>
<div class="a" style="left:1252px;top:307px;width:96px;height:104px;background:#fff;border:1px solid #646464"></div>
<div class="a" style="left:1253px;top:308px;width:94px;height:17px;background:#d6d6d6"></div>
<div class="t" style="left:1259px;top:312px;font-size:11.2px;color:#000">gg.aa.yyyy</div>
<div class="t" style="left:1259px;top:329px;font-size:11.2px;color:#000">a.g.yyyy</div>
<div class="t" style="left:1259px;top:346px;font-size:11.2px;color:#000">g.a.yy</div>
<div class="t" style="left:1259px;top:363px;font-size:11.2px;color:#000">yyyy.aa.gg</div>
<div class="t" style="left:1259px;top:380px;font-size:11.2px;color:#000">a.g.yy</div>
<div class="t" style="left:1259px;top:397px;font-size:11.2px;color:#000">g.aaa.yy</div>
<div class="a" style="left:1160px;top:415px;width:191px;height:278px;background:#ffe699;box-shadow:0 0 5px 1px rgba(0,0,0,.35)"></div>
<div class="a" style="left:1164px;top:416px;width:185px;color:#262626;font-size:12px;line-height:14.5px;font-style:italic">
<div style="font-weight:bold;font-size:11.4px">KULLANMA TALİMATLARI</div>
</div>
<div class="a" style="left:1164px;top:439px;font-size:12px;line-height:14.7px;color:#262626">•</div>
<div class="a" style="left:1182px;top:439px;white-space:nowrap;font-size:12.1px;line-height:14.7px;font-style:italic;color:#262626"><b style="font-size:11.6px">Yukarıdaki açılır listeden<br>tarih biçiminizi seçerek<br>başlayın!</b></div>
<div class="a" style="left:1164px;top:491px;font-size:12px;line-height:14.7px;color:#262626">•</div>
<div class="a" style="left:1182px;top:491px;white-space:nowrap;font-size:12.1px;line-height:14.7px;font-style:italic;color:#262626">Lütfen bir <b style="font-size:11.6px">atama tarihi</b> ve<br><b style="font-size:11.6px">termin tarihi</b> de girmeniz<br>gerektiğini unutmayın.</div>
<div class="a" style="left:1164px;top:544px;font-size:12px;line-height:14.7px;color:#262626">•</div>
<div class="a" style="left:1182px;top:544px;white-space:nowrap;font-size:12.1px;line-height:14.7px;font-style:italic;color:#262626">Gri hücreler otomatik olarak<br>doldurulduğu için <b style="font-size:11.6px">lütfen<br>değiştirmeyin</b>.</div>
<div class="a" style="left:1164px;top:596px;font-size:12px;line-height:14.7px;color:#262626">•</div>
<div class="a" style="left:1182px;top:596px;white-space:nowrap;font-size:12.1px;line-height:14.7px;font-style:italic;color:#262626">Aylık istatistikleri ve toplam<br>istatistikleri de burada<br>görebilirsiniz.</div>
<div class="a" style="left:1164px;top:648px;font-size:12px;line-height:14.7px;color:#262626">•</div>
<div class="a" style="left:1182px;top:648px;white-space:nowrap;font-size:12.1px;line-height:14.7px;font-style:italic;color:#262626"><b style="font-size:11.6px">Daha fazla satıra</b> ihtiyacınız<br>varsa lütfen sol taraftaki artı<br>(+) düğmesine tıklayın.</div>
</body></html>
